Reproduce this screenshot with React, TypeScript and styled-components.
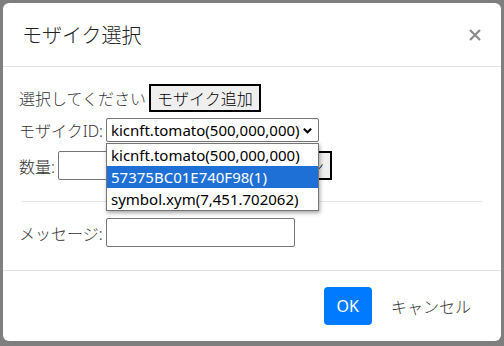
import styled, { createGlobalStyle } from "styled-components";

const GlobalStyle = createGlobalStyle`
    html, body{
        margin: 0;
        padding: 0;
        background-color: #7f7f7f;
        font-family: "Noto Sans", "Noto Sans CJK JP", sans-serif;
        color: #212529;
    }
    *{
        box-sizing: border-box;
    }
`;

const Backdrop = styled.div`
    width: 504px;
    height: 346px;
    padding: 3px;
`;

const Modal = styled.div`
    width: 498px;
    height: 338px;
    background-color: #fff;
    border-radius: 6px;
    display: flex;
    flex-direction: column;
`;

const Header = styled.div`
    height: 64px;
    padding: 0 19px;
    display: flex;
    align-items: center;
    justify-content: space-between;
    border-bottom: 1px solid #dee2e6;
`;

const Title = styled.h5`
    margin: 0;
    font-size: 20px;
    font-weight: 300;
    color: #222;
`;

const Close = styled.span`
    display: flex;
    margin-right: 1px;
    margin-top: 0;
`;

const Body = styled.div`
    flex: 1;
    padding: 16px 16px 0 16px;
    font-size: 16px;
    position: relative;
`;

const Row = styled.div<{ top: number }>`
    display: flex;
    align-items: center;
    margin-top: ${props => props.top}px;
`;

const Label = styled.span`
    color: #333;
    font-weight: 300;
    margin-right: 3px;
`;

const PlainButton = styled.button`
    font-family: "Noto Sans CJK JP", sans-serif;
    font-size: 16px;
    font-weight: 300;
    height: 28px;
    padding: 0 6px;
    background-color: #efefef;
    border: 2px solid #000;
    color: #000;
    line-height: 1;
`;

const Select = styled.div`
    width: 213px;
    height: 24px;
    border: 1px solid #767676;
    border-radius: 2px;
    display: flex;
    align-items: center;
    justify-content: space-between;
    padding: 0 5px 0 4px;
    font-size: 15px;
    color: #000;
    svg{
        flex-shrink: 0;
    }
`;

const Input = styled.div<{ w: number; h: number }>`
    width: ${props => props.w}px;
    height: ${props => props.h}px;
    border: 1px solid #767676;
    border-radius: 2px;
    background-color: #fff;
`;

const Rule = styled.hr`
    margin: 21px 3px 0 3px;
    border: 0;
    border-top: 1px solid #e3e5e8;
`;

const ListBox = styled.div`
    position: absolute;
    left: 103px;
    top: 76px;
    width: 213px;
    border: 1px solid #767676;
    background-color: #fff;
    box-shadow: 1px 2px 4px rgba(0, 0, 0, 0.35);
    padding: 0;
    z-index: 2;
`;

const Option = styled.div<{ selected?: boolean }>`
    height: 22px;
    line-height: 22px;
    padding-left: 4px;
    font-size: 15px;
    background-color: ${props => props.selected ? "#1e6fd6" : "transparent"};
    color: ${props => props.selected ? "#fff" : "#000"};
    white-space: nowrap;
`;

const Footer = styled.div`
    height: 71px;
    border-top: 1px solid #dee2e6;
    display: flex;
    align-items: center;
    justify-content: flex-end;
    padding: 0 18px 0 0;
    gap: 7px;
`;

const Button = styled.button<{ primary?: boolean }>`
    font-family: "Noto Sans", "Noto Sans CJK JP", sans-serif;
    font-size: 16px;
    font-weight: ${props => props.primary ? 400 : 300};
    height: 38px;
    padding: 0 ${props => props.primary ? 13 : 12}px;
    border: 0;
    border-radius: 4px;
    background-color: ${props => props.primary ? "#007bff" : "transparent"};
    color: ${props => props.primary ? "#fff" : "#333"};
`;

const options = [
    "kicnft.tomato(500,000,000)",
    "57375BC01E740F98(1)",
    "symbol.xym(7,451.702062)",
];

const App = () => {
    return (
        <>
            <GlobalStyle />
            <Backdrop>
                <Modal>
                    <Header>
                        <Title>モザイク選択</Title>
                        <Close>
                            <svg width="12" height="12" viewBox="0 0 12 12">
                                <path d="M1 1 L11 11 M11 1 L1 11" stroke="#8a8a8a" strokeWidth="2.2" />
                            </svg>
                        </Close>
                    </Header>
                    <Body>
                        <Row top={1}>
                            <Label>選択してください</Label>
                            <PlainButton>モザイク追加</PlainButton>
                        </Row>
                        <Row top={6}>
                            <Label>モザイクID:</Label>
                            <Select>
                                <span>{options[0]}</span>
                                <svg width="11" height="11" viewBox="0 0 12 12">
                                    <path d="M2 4 L6 8 L10 4" fill="none" stroke="#000" strokeWidth="2.2" />
                                </svg>
                            </Select>
                        </Row>
                        <Row top={9}>
                            <Label>数量:</Label>
                            <Input w={176} h={29} />
                            <PlainButton style={{ height: 29, marginLeft: 2 }}>最大ボタン</PlainButton>
                        </Row>
                        <Rule />
                        <Row top={16}>
                            <Label>メッセージ:</Label>
                            <Input w={189} h={29} />
                        </Row>
                        <ListBox>
                            {options.map((o, i) => (
                                <Option key={o} selected={i === 1}>{o}</Option>
                            ))}
                        </ListBox>
                    </Body>
                    <Footer>
                        <Button primary>OK</Button>
                        <Button>キャンセル</Button>
                    </Footer>
                </Modal>
            </Backdrop>
        </>
    );
};

export default App;
